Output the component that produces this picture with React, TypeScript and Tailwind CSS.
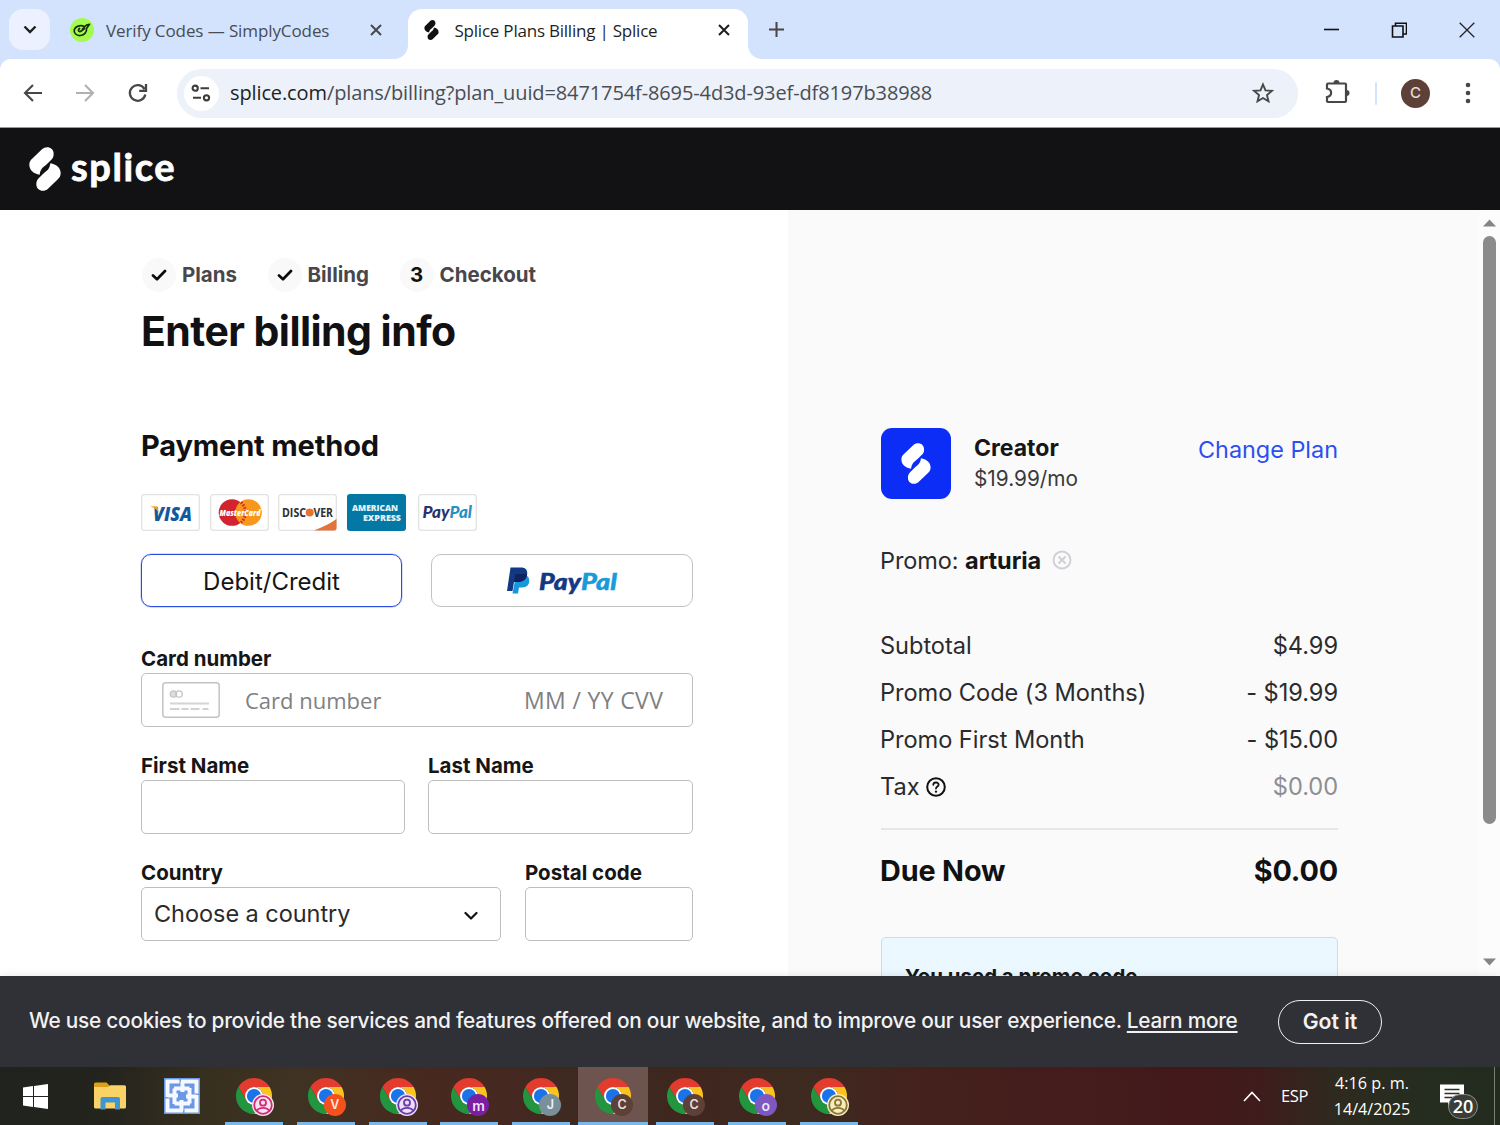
import type { ReactNode } from "react";

const INTER = "font-['Inter',sans-serif]";
const SEGOE = "font-['Open_Sans',sans-serif]";

function SpliceMark({ className }: { className: string }) {
  const half =
    "M38 7C50 -5 73 0 73 20C73 28 71 33 66 38L53 51C47 57 38 62 35 69C32 74 32 78 31 83C14 80 0 70 0 53C0 44 4 39 10 34Z";
  return (
    <svg viewBox="0 0 94 132" className={className} fill="currentColor">
      <path d={half} />
      <path d={half} transform="rotate(180 47 66)" />
    </svg>
  );
}

function CloseX({ className }: { className: string }) {
  return (
    <svg viewBox="0 0 12 12" className={className} fill="none" stroke="currentColor" strokeWidth="2">
      <path d="M1 1l10 10M11 1L1 11" />
    </svg>
  );
}

function TabStrip() {
  return (
    <div className={`flex h-[59px] shrink-0 bg-[#d3e3fd] ${SEGOE}`}>
      <div className="ml-[9px] mt-[9px] flex h-[41px] w-[41px] items-center justify-center rounded-[14px] bg-[#ebf1fe]">
        <svg viewBox="0 0 14 9" className="h-[9px] w-[14px]" fill="none" stroke="#1f1f1f" strokeWidth="2.4">
          <path d="M1.5 1.5L7 7l5.5-5.5" />
        </svg>
      </div>
      <div className="ml-[20px] flex h-[60px] w-[338px] items-center">
        <svg viewBox="0 0 24 24" className="h-6 w-6 shrink-0">
          <circle cx="12" cy="12" r="12" fill="#a4fb4e" />
          <g fill="none" stroke="#16300c" strokeWidth="1.7" strokeLinecap="round" strokeLinejoin="round">
            <path d="M14 8.200C10 6.500 5.500 8.500 4.300 11.500C3.500 15 6.500 18 10.500 17.500C14.500 17 17 14 16.500 10.500L19.500 6.300L16.500 7L12.500 11" />
            <path d="M9.500 10.500C7.500 12 8.500 14 10.500 13.500L14.500 10.500" />
          </g>
        </svg>
        <span className="ml-[12px] w-[263.500px] whitespace-nowrap pt-[1px] text-[17px] tracking-[-0.1px] text-[#474c55]">
          Verify Codes — SimplyCodes
        </span>
        <CloseX className="h-3 w-3 text-[#474747]" />
      </div>
      <div className="relative mt-[9px] flex h-[50px] w-[340px] items-center rounded-t-[14px] bg-white pb-[8px]">
        <svg viewBox="0 0 14 14" className="absolute -left-[14px] bottom-0 h-[14px] w-[14px]" fill="white">
          <path d="M14 0A14 14 0 0 1 0 14H14Z" />
        </svg>
        <svg viewBox="0 0 14 14" className="absolute -right-[14px] bottom-0 h-[14px] w-[14px]" fill="white">
          <path d="M0 0A14 14 0 0 0 14 14H0Z" />
        </svg>
        <SpliceMark className="ml-[16px] h-[20px] w-[15px] text-[#111]" />
        <span className="ml-[15.500px] w-[263.500px] whitespace-nowrap pt-[1px] text-[17px] tracking-[-0.22px] text-[#1f1f1f]">
          Splice Plans Billing | Splice
        </span>
        <CloseX className="h-3 w-3 text-[#1f1f1f]" />
      </div>
      <svg viewBox="0 0 14 14" className="ml-[21px] mt-[22px] h-[15px] w-[15px]" stroke="#474747" strokeWidth="1.9">
        <path d="M7 0v14M0 7h14" />
      </svg>
      <div className="mr-[25px] flex h-[60px] grow items-center justify-end gap-[52px]">
        <svg viewBox="0 0 16 16" className="h-4 w-4" stroke="#111" strokeWidth="1.6">
          <path d="M1 7.500h15" />
        </svg>
        <svg viewBox="0 0 16 16" className="h-4 w-4" fill="none" stroke="#111" strokeWidth="1.6">
          <path d="M1.500 4H12v11H1.500z" />
          <path d="M4.500 4V1.200h11V12H12" />
        </svg>
        <svg viewBox="0 0 16 16" className="h-4 w-4" stroke="#222" strokeWidth="1.3">
          <path d="M.7.7l14.600 14.600M15.300.7L.7 15.300" />
        </svg>
      </div>
    </div>
  );
}

function Toolbar() {
  return (
    <div className="h-[69px] shrink-0 bg-[#d3e3fd]">
      <div className="flex h-[69px] items-center rounded-t-[11px] border-b border-[#9a9a9a] bg-white">
        <svg viewBox="0 0 20 20" className="ml-[23px] h-5 w-5" fill="none" stroke="#474747" strokeWidth="2.1">
          <path d="M19 10H2.500M10 2L2 10l8 8" />
        </svg>
        <svg viewBox="0 0 20 20" className="ml-[32px] h-5 w-5" fill="none" stroke="#b0b0b0" strokeWidth="2.1">
          <path d="M1 10h16.500M10 2l8 8-8 8" />
        </svg>
        <svg viewBox="0 0 20 20" className="ml-[33px] h-5 w-5" fill="none" stroke="#474747" strokeWidth="2.3">
          <path d="M17.300 11.500A7.800 7.800 0 1 1 16.500 6.200M18 1v6.800h-6.800" />
        </svg>
        <div className="ml-[29px] flex h-[49px] w-[1121px] items-center rounded-full bg-[#ecf1fa]">
          <div className="ml-[7px] flex h-[35px] w-[35px] items-center justify-center rounded-full bg-white">
            <svg viewBox="0 0 20 18" className="-ml-[1px] h-[18px] w-5" fill="none" stroke="#3c3c3c" strokeWidth="2.100">
              <circle cx="4.200" cy="4.200" r="2.600" />
              <path d="M9.500 4.200H18M2 13.800h8" />
              <circle cx="15.500" cy="13.800" r="2.600" />
            </svg>
          </div>
          <div className={`ml-[11px] w-[1022px] whitespace-nowrap text-[20px] tracking-[-0.115px] text-[#4a4e52] ${SEGOE}`}>
            <span className="text-[#1f1f1f]">splice.com</span>/plans/billing?plan_uuid=8471754f-8695-4d3d-93ef-df8197b38988
          </div>
          <svg viewBox="0 0 22 22" className="h-[22px] w-[22px]" fill="none" stroke="#474747" strokeWidth="1.900">
            <path d="M11 2.500l2.500 5.900 6.300.5-4.800 4.200 1.500 6.200L11 16l-5.500 3.300L7 13.100 2.200 8.900l6.300-.5z" />
          </svg>
        </div>
        <svg viewBox="0 0 25 25" className="mb-[3px] ml-[27px] h-[25px] w-[25px]" fill="none" stroke="#474747" strokeWidth="2.200">
          <path d="M3 4.500H20Q21 4.500 21 5.500V22Q21 23 20 23H3Q2 23 2 22V18C7.500 17 7.500 10.500 2 9.500V5.500Q2 4.500 3 4.500Z" />
          <path d="M8.500 4a3 3 0 0 1 6 0zM21.500 11a3 3 0 0 1 0 6z" fill="#474747" stroke="none" />
        </svg>
        <div className="ml-[25px] h-[23px] w-[2px] rounded bg-[#d3e3fd]" />
        <div className={`ml-[24px] flex h-[29px] w-[29px] items-center justify-center rounded-full bg-[#5d4037] text-[15px] font-medium text-[#e9dcd6] ${INTER}`}>
          C
        </div>
        <svg viewBox="0 0 6 22" className="ml-[35px] h-[22px] w-[6px]" fill="#474747">
          <circle cx="3" cy="3" r="2.300" />
          <circle cx="3" cy="11" r="2.300" />
          <circle cx="3" cy="19" r="2.300" />
        </svg>
      </div>
    </div>
  );
}

function Step({ mark, label, className }: { mark: ReactNode; label: string; className: string }) {
  return (
    <div className={`flex items-center ${className}`}>
      <div className="flex h-[34px] w-[34px] items-center justify-center rounded-full bg-[#f9f9f9] text-[20.500px] text-[#111]">
        {mark}
      </div>
      <span className="ml-[6px] text-[20.500px] text-[#47474c]">{label}</span>
    </div>
  );
}

function Check() {
  return (
    <svg viewBox="0 0 16 12" className="h-3 w-4" fill="none" stroke="#0c0c0d" strokeWidth="2.700" strokeLinecap="round" strokeLinejoin="round">
      <path d="M2 6.500l4 3.700L14 2" />
    </svg>
  );
}

function CardLogos() {
  const box = "h-[37px] w-[59px] shrink-0";
  const frame = <rect x=".7" y=".7" width="57.600" height="35.600" rx="2.500" fill="#fff" stroke="#e2e2e2" strokeWidth="1.300" />;
  return (
    <div className="mt-[30px] flex h-[37px] font-['Open_Sans',sans-serif]">
      <svg viewBox="0 0 59 37" className={box}>
        {frame}
        <text x="12" y="26.500" fontSize="20" fontWeight="800" fontStyle="italic" fill="#14599b" textLength="39" lengthAdjust="spacingAndGlyphs">VISA</text>
        <path d="M9 12.300h7l2 6.500c-2-3-4.500-5-9-6.500z" fill="#f2a52c" />
      </svg>
      <svg viewBox="0 0 59 37" className={`ml-[10px] ${box}`}>
        {frame}
        <circle cx="22" cy="18.500" r="13.300" fill="#d2232f" />
        <circle cx="38.500" cy="18.500" r="13.300" fill="#f7981d" />
        <path d="M31 8.500A13.300 13.300 0 0 1 31 28.500" fill="none" stroke="#d2232f" strokeWidth="3" strokeDasharray="1.500 1.500" />
        <text x="9.500" y="22" fontSize="9.500" fontWeight="800" fontStyle="italic" fill="#fff" textLength="41" lengthAdjust="spacingAndGlyphs">MasterCard</text>
      </svg>
      <svg viewBox="0 0 59 37" className={`ml-[9px] ${box}`}>
        {frame}
        <path d="M36 36.500C45 33 53 29 58.500 25v9q0 2.500-2.500 2.500z" fill="#e2733a" />
        <g fontSize="11.500" fontWeight="700" fill="#2f2f33">
          <text x="4" y="22.500" textLength="24" lengthAdjust="spacingAndGlyphs">DISC</text>
          <text x="35.500" y="22.500" textLength="19.500" lengthAdjust="spacingAndGlyphs">VER</text>
        </g>
        <circle cx="31.700" cy="18.500" r="4" fill="#e8742f" />
      </svg>
      <svg viewBox="0 0 59 37" className={`ml-[10px] ${box}`}>
        <rect width="59" height="37" rx="3" fill="#0478a4" />
        <g fontSize="9.500" fontWeight="800" fill="#e4f3f8">
          <text x="5" y="17" textLength="46" lengthAdjust="spacingAndGlyphs">AMERICAN</text>
          <text x="16" y="27" textLength="38" lengthAdjust="spacingAndGlyphs">EXPRESS</text>
        </g>
      </svg>
      <svg viewBox="0 0 59 37" className={`ml-[12px] ${box}`}>
        {frame}
        <g fontFamily="Lato" fontSize="16.500" fontWeight="900" fontStyle="italic">
          <text x="4.500" y="24" fill="#25346f" textLength="27" lengthAdjust="spacingAndGlyphs">Pay</text>
          <text x="31.500" y="24" fill="#2790c3" textLength="22.500" lengthAdjust="spacingAndGlyphs">Pal</text>
        </g>
      </svg>
    </div>
  );
}

function PayPalLogo() {
  return (
    <svg viewBox="0 0 112 28" className="h-7 w-28">
      <path d="M10 8h9c4 1 4.800 4.500 4 8-1.500 4-5 4.500-8 4.500h-2L12 26.500H6.500z" fill="#1698dc" />
      <path d="M4.500 0.500H15c5 0 7 3 6 7.500-1 5-4.500 7-9.500 7H8L6.500 24H1z" fill="#123984" />
      <path d="M9.500 7H21c0 5.500-4.500 8-9.500 8H8z" fill="#14215e" />
      <g fontFamily="Lato" fontSize="23" fontWeight="900" fontStyle="italic" strokeWidth=".5">
        <text x="33" y="23" fill="#123984" stroke="#123984" textLength="42" lengthAdjust="spacingAndGlyphs">Pay</text>
        <text x="75" y="23" fill="#189bd9" stroke="#189bd9" textLength="36" lengthAdjust="spacingAndGlyphs">Pal</text>
      </g>
    </svg>
  );
}

function Field({ label, className, children }: { label: string; className: string; children?: ReactNode }) {
  return (
    <div className={className}>
      <div className="h-6 text-[20.500px] font-bold leading-[26px] text-[#161617]">{label}</div>
      <div className="mt-[3px] flex h-[54px] items-center rounded-[5px] border-[1.500px] border-[#bebebe] bg-white">{children}</div>
    </div>
  );
}

function BillingForm() {
  return (
    <main className="flex w-[788px] shrink-0 flex-col pl-[141px] pt-[48px]">
      <div className="ml-[1px] flex h-[34px] font-bold">
        <Step mark={<Check />} label="Plans" className="w-[125.500px]" />
        <Step mark={<Check />} label="Billing" className="w-[132px]" />
        <Step mark="3" label="Checkout" className="" />
      </div>
      <h1 className="mt-[15px] h-12 text-[41px] font-bold leading-[48px] tracking-[-0.550px] text-[#111113]">Enter billing info</h1>
      <h2 className="mt-[73px] h-9 text-[29px] font-bold leading-9 tracking-[-0.150px] text-[#111113]">Payment method</h2>
      <CardLogos />
      <div className="mt-[23px] flex w-[552px] justify-between text-[24px] text-[#161617]">
        <button className="h-[53px] w-[261px] rounded-[10px] border-[1.500px] border-[#2a4fe0] pt-[3px] ring-[0.500px] ring-[#2a4fe0]/40">Debit/Credit</button>
        <button className="flex h-[53px] w-[262px] items-center justify-center rounded-[10px] border-[1.500px] border-[#c2c2c2]">
          <PayPalLogo />
        </button>
      </div>
      <Field label="Card number" className="mt-[39px] w-[552px]">
        <svg viewBox="0 0 58 36" className="ml-[20px] h-9 w-[58px]" fill="none" stroke="#c4c4c4">
          <rect x=".8" y=".8" width="56.400" height="34.400" rx="3" strokeWidth="1.500" />
          <circle cx="11.500" cy="12" r="3.200" strokeWidth="1.300" fill="#dedede" />
          <circle cx="17" cy="12" r="3.200" strokeWidth="1.300" />
          <path d="M8 21.500h39" strokeWidth="2" stroke="#d4d4d4" />
          <path d="M8 27h9.500M19.500 27h7M28.500 27h9M40.500 27h6" strokeWidth="1.400" />
        </svg>
        <span className={`ml-[25px] w-[279px] text-[22px] leading-[30px] text-[#808083] ${SEGOE}`}>Card number</span>
        <span className={`whitespace-pre text-[23px] leading-[30px] tracking-[0.350px] text-[#808083] ${SEGOE}`}>MM / YY CVV</span>
      </Field>
      <div className="mt-[26px] flex w-[552px] justify-between">
        <Field label="First Name" className="w-[264px]" />
        <Field label="Last Name" className="w-[265px]" />
      </div>
      <div className="mt-[26px] flex w-[552px] justify-between">
        <Field label="Country" className="w-[360px]">
          <span className="ml-[12px] w-[310px] text-[23.500px] tracking-[-0.050px] text-[#2a2a2c]">Choose a country</span>
          <svg viewBox="0 0 14 10" className="mt-[3px] h-[10px] w-[14px]" fill="none" stroke="#111" strokeWidth="2.200" strokeLinecap="round" strokeLinejoin="round">
            <path d="M1.500 2L7 7.500 12.500 2" />
          </svg>
        </Field>
        <Field label="Postal code" className="w-[168px]" />
      </div>
    </main>
  );
}

function Row({ label, value, muted }: { label: ReactNode; value: string; muted?: boolean }) {
  return (
    <div className="flex h-[47px] items-center justify-between text-[23.600px] tracking-[-0.050px] text-[#2b2b2e]">
      <span className="-ml-[1px] flex items-center">{label}</span>
      <span className={muted ? "text-[#8e8e93]" : ""}>{value}</span>
    </div>
  );
}

function Summary() {
  return (
    <aside className="w-[691px] shrink-0 bg-[#fafafa] pl-[93px] pt-[218px]">
      <div className="w-[457px]">
        <div className="flex h-[71px]">
          <div className="flex h-[71px] w-[70px] items-center justify-center rounded-[11px] bg-[#0c2df5]">
            <SpliceMark className="h-[41px] w-[30px] text-white" />
          </div>
          <div className="ml-[23px] grow">
            <div className="mt-[5px] h-[30px] text-[23px] font-bold leading-[30px] text-[#161617]">Creator</div>
            <div className="h-[30px] text-[20.800px] leading-[31px] text-[#3a3a3d]">$19.99/mo</div>
          </div>
          <a className="mt-[6px] h-[30px] text-[23.400px] leading-[31px] text-[#2c4ff0]">Change Plan</a>
        </div>
        <div className="mt-[44px] flex h-9 items-center text-[23.500px] tracking-[-0.080px] text-[#2b2b2e]">
          <span className="-ml-[1px]">
            Promo: <b className="text-[#161617]">arturia</b>
          </span>
          <svg viewBox="0 0 20 20" className="mb-[3px] ml-[11px] h-5 w-5" fill="none" stroke="#cfcfd4" strokeWidth="1.900">
            <circle cx="10" cy="10" r="8.500" />
            <path d="M6.500 6.500l7 7M13.500 6.500l-7 7" />
          </svg>
        </div>
        <div className="mt-[43px]">
          <Row label="Subtotal" value="$4.99" />
          <Row label="Promo Code (3 Months)" value="- $19.99" />
          <Row label="Promo First Month" value="- $15.00" />
          <Row
            muted
            value="$0.00"
            label={
              <>
                Tax
                <svg viewBox="0 0 20 20" className="ml-[7px] mt-[2px] h-5 w-5" fill="none" stroke="#111" strokeWidth="2" strokeLinecap="round">
                  <circle cx="10" cy="10" r="8.800" />
                  <path d="M7.300 7.800C7.500 4.600 12.800 4.800 12.600 7.900C12.500 9.600 10.200 9.600 10 11.500" strokeWidth="1.800" />
                  <circle cx="10" cy="14.600" r=".5" strokeWidth="1.400" />
                </svg>
              </>
            }
          />
        </div>
        <div className="mt-[18px] h-[2px] bg-[#e6e6e7]" />
        <div className="mt-[23px] flex h-9 items-center justify-between text-[28.800px] font-bold tracking-[-0.150px] text-[#111113]">
          <span className="-ml-[1px]">Due Now</span>
          <span>$0.00</span>
        </div>
        <div className="mt-[48px] h-[90px] rounded-t-[5px] border-[1.500px] border-[#bfdffc] bg-[#ebf8ff] pl-[23px] pt-[27px] text-[20.450px] font-bold leading-6 text-[#161617]">
          You used a promo code
        </div>
      </div>
    </aside>
  );
}

function ScrollBar() {
  return (
    <div className="flex w-[21px] shrink-0 flex-col items-center bg-[#fcfcfc]">
      <svg viewBox="0 0 13 7" className="mt-[9px] h-[8px] w-[13px] shrink-0" fill="#858585">
        <path d="M0 7L6.500 0 13 7z" />
      </svg>
      <div className="mt-[9px] h-[588px] w-[13px] shrink-0 rounded-full bg-[#8b8b8b]" />
      <svg viewBox="0 0 13 7" className="mt-[134px] h-[8px] w-[13px] shrink-0" fill="#858585">
        <path d="M0 0L6.500 7 13 0z" />
      </svg>
    </div>
  );
}

function CookieBar() {
  return (
    <div className="relative flex h-[91px] shrink-0 items-center whitespace-nowrap bg-[#303136] pl-[29px] text-[#f2f2f3] shadow-[0_-1px_8px_rgba(0,0,0,0.08)]">
      <p className="w-[1249px] pb-[1px] text-[20.800px] font-medium tracking-[-0.245px]">
        We use cookies to provide the services and features offered on our website, and to improve our user experience.{" "}
        <a className="underline decoration-[1.500px] underline-offset-[3px]">Learn more</a>
      </p>
      <button className="h-[44px] w-[104px] rounded-full border-[1.500px] border-[#f0f0f0] text-[21.200px] font-semibold">Got it</button>
    </div>
  );
}

function Person() {
  return (
    <svg viewBox="0 0 22 22" className="h-[22px] w-[22px]" fill="none" stroke="currentColor" strokeWidth="1.800">
      <circle cx="11" cy="11" r="8.800" />
      <circle cx="11" cy="8.700" r="3" />
      <path d="M4.800 16.500c3-3.500 9.400-3.500 12.400 0" />
    </svg>
  );
}

function ChromeApp({ badge, letter, active }: { badge: string; letter?: string; active?: boolean }) {
  return (
    <div className="flex h-[58px] w-[71.850px] shrink-0 justify-center">
      <div className={`relative flex h-[58px] justify-center ${active ? "w-[70px] bg-[#6d544f]" : "w-[58px]"}`}>
        <svg viewBox="0 0 48 48" className="mt-[11px] h-9 w-9">
          <path d="M24 12H44.780A24 24 0 0 0 3.220 12L13.610 30A12 12 0 0 1 24 12Z" fill="#e33b2e" />
          <path d="M34.390 30L24 48A24 24 0 0 1 3.220 12L13.610 30A12 12 0 0 0 34.390 30Z" fill="#22963f" />
          <path d="M24 12H44.780A24 24 0 0 1 24 48L34.390 30A12 12 0 0 0 24 12Z" fill="#fcc31e" />
          <circle cx="24" cy="24" r="12" fill="#fff" />
          <circle cx="24" cy="24" r="9.500" fill="#1a73e8" />
        </svg>
        <div className={`absolute bottom-[9px] left-1/2 -ml-[2px] flex h-[22px] w-[22px] items-center justify-center rounded-full text-[12.500px] ${badge}`}>
          {letter ?? <Person />}
        </div>
        <div className="absolute inset-x-0 bottom-0 h-[3px] bg-[#7ab8ea]" />
      </div>
    </div>
  );
}

function MazeIcon() {
  const arm = "M3.500 1.500V19M1.500 3.500H15.500M10.500 10.500V17.500M3.500 17.500H14M10 10.500H17";
  return (
    <svg viewBox="0 0 36 36" className="ml-[38px] mt-[11px] h-9 w-9">
      <rect width="36" height="36" fill="#6b98e4" />
      <g fill="none" stroke="#f5f8fe" strokeWidth="4">
        <path d={arm} />
        <path d={arm} transform="rotate(90 18 18)" />
        <path d={arm} transform="rotate(180 18 18)" />
        <path d={arm} transform="rotate(270 18 18)" />
      </g>
    </svg>
  );
}

function Taskbar() {
  return (
    <div
      className={`flex h-[58px] shrink-0 text-white ${SEGOE} bg-[linear-gradient(90deg,#20231f_0%,#24241d_7%,#38301f_14%,#403323_20%,#47291f_28%,#452821_34%,#3b2a20_40%,#40261f_46%,#3c2b20_53%,#45211d_62%,#43191b_80%,#3f1c1b_84%,#2e2a20_89%,#252d1f_95%,#222b1e_100%)]`}
    >
      <svg viewBox="0 0 25 25" className="ml-[23px] mt-[17px] h-[25px] w-[25px]" fill="#fff">
        <path d="M0 3.500L10 2v10H0zM11 1.900L25 0v12H11zM0 13h10v10L0 21.500zM11 13h14v12l-14-1.900z" />
      </svg>
      <svg viewBox="0 0 32 28" className="ml-[46px] mt-[15px] h-7 w-8">
        <path d="M0 2q0-1.500 1.500-1.500h11L15 3v4H0z" fill="#dfa017" />
        <path d="M0 5h14l2-1.800h14.500q1.500 0 1.500 1.500V25q0 1.500-1.500 1.500h-29Q0 26.500 0 25z" fill="#fbd266" />
        <path d="M6.500 17q0-2 2-2h15.500q2 0 2 2v10.500h-5V20.500h-9.500v7h-5z" fill="#3f96d3" />
      </svg>
      <MazeIcon />
      <div className={`ml-[18px] flex w-[647px] ${INTER} font-semibold`}>
        <ChromeApp badge="bg-[#fbe3ee] text-[#cf2a7c]" />
        <ChromeApp badge="bg-[#f4511e] text-[#fde5dc]" letter="V" />
        <ChromeApp badge="bg-[#ebdffa] text-[#6a3bab]" />
        <ChromeApp badge="bg-[#7b1fa2] text-[#f2ddf7] !text-[14px]" letter="m" />
        <ChromeApp badge="bg-[#78909c] text-[#eef3f5]" letter="J" />
        <ChromeApp badge="bg-[#5d4037] text-[#ecdfda]" letter="C" active />
        <ChromeApp badge="bg-[#5d4037] text-[#ecdfda]" letter="C" />
        <ChromeApp badge="bg-[#7e57c2] text-[#ece3fa] !text-[14px]" letter="o" />
        <ChromeApp badge="bg-[#f6ecc0] text-[#8c7530]" />
      </div>
      <div className="flex grow justify-end">
        <svg viewBox="0 0 18 11" className="mt-[24px] h-[11px] w-[18px]" fill="none" stroke="#fff" strokeWidth="1.700">
          <path d="M1 10L9 1.500 17 10" />
        </svg>
        <span className="ml-[20px] mt-[17px] h-6 w-[28px] text-[16.500px] leading-6 tracking-[-0.300px]">ESP</span>
        <div className="ml-[21px] w-[84px] whitespace-nowrap pt-[3px] text-center text-[16.200px] leading-[26px]">
          <div>4:16 p. m.</div>
          <div>14/4/2025</div>
        </div>
        <div className="relative ml-[26px] mt-[16px] w-[54px]">
          <svg viewBox="0 0 24 24" className="h-6 w-6">
            <path d="M0 1.500h24v18H14L9.500 24H8v-4.500H0z" fill="#fff" />
            <path d="M4.500 6.500h15M4.500 10.500h15M4.500 14.500h12" stroke="#2a3024" strokeWidth="1.500" />
          </svg>
          <div className={`absolute left-[8px] top-[11px] flex h-[25px] w-[30px] items-center justify-center rounded-full border-[1.500px] border-[#8b8d88] bg-[#3a3d38] text-[18px] font-semibold ${SEGOE}`}>
            20
          </div>
        </div>
        <div className="mr-[5px] h-[58px] w-[1px] bg-[#7b7f76]" />
      </div>
    </div>
  );
}

export default function App() {
  return (
    <div className={`flex h-[1125px] w-[1500px] flex-col overflow-hidden bg-white ${INTER}`}>
      <TabStrip />
      <Toolbar />
      <header className="flex h-[82px] shrink-0 items-center bg-[#121214] pl-[29px] text-white">
        <SpliceMark className="h-[44px] w-[32px]" />
        <span className="mb-[6px] ml-[10px] font-['Lato',sans-serif] text-[38px] font-bold leading-none tracking-[1.600px] [-webkit-text-stroke:0.800px_white]">splice</span>
      </header>
      <div className="flex h-[766px] shrink-0 overflow-hidden">
        <BillingForm />
        <Summary />
        <ScrollBar />
      </div>
      <CookieBar />
      <Taskbar />
    </div>
  );
}
